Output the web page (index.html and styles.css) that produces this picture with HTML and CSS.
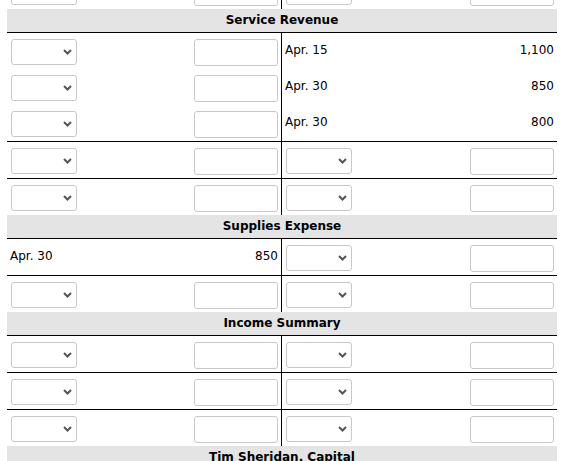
FILE: index.html
```html
<!DOCTYPE html>
<html>
<head>
<meta charset="utf-8">
<link rel="stylesheet" href="styles.css">
</head>
<body>
<div class="sheet">
  <div class="row">
    <div class="cell left"><div class="sel"><svg class="chev" viewBox="0 0 9 6" width="9" height="6"><polyline points="1,1 4.5,4.5 8,1"/></svg></div><input class="inp" type="text"></div>
    <div class="cell right"><div class="sel"><svg class="chev" viewBox="0 0 9 6" width="9" height="6"><polyline points="1,1 4.5,4.5 8,1"/></svg></div><input class="inp" type="text"></div>
  </div>

  <div class="band">Service Revenue</div>
  <div class="row">
    <div class="cell left"><div class="sel"><svg class="chev" viewBox="0 0 9 6" width="9" height="6"><polyline points="1,1 4.5,4.5 8,1"/></svg></div><input class="inp" type="text"></div>
    <div class="cell right text"><span>Apr. 15</span><span>1,100</span></div>
  </div>
  <div class="row">
    <div class="cell left"><div class="sel"><svg class="chev" viewBox="0 0 9 6" width="9" height="6"><polyline points="1,1 4.5,4.5 8,1"/></svg></div><input class="inp" type="text"></div>
    <div class="cell right text"><span>Apr. 30</span><span>850</span></div>
  </div>
  <div class="row">
    <div class="cell left"><div class="sel"><svg class="chev" viewBox="0 0 9 6" width="9" height="6"><polyline points="1,1 4.5,4.5 8,1"/></svg></div><input class="inp" type="text"></div>
    <div class="cell right text"><span>Apr. 30</span><span>800</span></div>
  </div>
  <div class="row ruled">
    <div class="cell left"><div class="sel"><svg class="chev" viewBox="0 0 9 6" width="9" height="6"><polyline points="1,1 4.5,4.5 8,1"/></svg></div><input class="inp" type="text"></div>
    <div class="cell right"><div class="sel"><svg class="chev" viewBox="0 0 9 6" width="9" height="6"><polyline points="1,1 4.5,4.5 8,1"/></svg></div><input class="inp" type="text"></div>
  </div>
  <div class="row ruled">
    <div class="cell left"><div class="sel"><svg class="chev" viewBox="0 0 9 6" width="9" height="6"><polyline points="1,1 4.5,4.5 8,1"/></svg></div><input class="inp" type="text"></div>
    <div class="cell right"><div class="sel"><svg class="chev" viewBox="0 0 9 6" width="9" height="6"><polyline points="1,1 4.5,4.5 8,1"/></svg></div><input class="inp" type="text"></div>
  </div>

  <div class="band">Supplies Expense</div>
  <div class="row">
    <div class="cell left text"><span>Apr. 30</span><span>850</span></div>
    <div class="cell right"><div class="sel"><svg class="chev" viewBox="0 0 9 6" width="9" height="6"><polyline points="1,1 4.5,4.5 8,1"/></svg></div><input class="inp" type="text"></div>
  </div>
  <div class="row ruled">
    <div class="cell left"><div class="sel"><svg class="chev" viewBox="0 0 9 6" width="9" height="6"><polyline points="1,1 4.5,4.5 8,1"/></svg></div><input class="inp" type="text"></div>
    <div class="cell right"><div class="sel"><svg class="chev" viewBox="0 0 9 6" width="9" height="6"><polyline points="1,1 4.5,4.5 8,1"/></svg></div><input class="inp" type="text"></div>
  </div>

  <div class="band">Income Summary</div>
  <div class="row">
    <div class="cell left"><div class="sel"><svg class="chev" viewBox="0 0 9 6" width="9" height="6"><polyline points="1,1 4.5,4.5 8,1"/></svg></div><input class="inp" type="text"></div>
    <div class="cell right"><div class="sel"><svg class="chev" viewBox="0 0 9 6" width="9" height="6"><polyline points="1,1 4.5,4.5 8,1"/></svg></div><input class="inp" type="text"></div>
  </div>
  <div class="row ruled">
    <div class="cell left"><div class="sel"><svg class="chev" viewBox="0 0 9 6" width="9" height="6"><polyline points="1,1 4.5,4.5 8,1"/></svg></div><input class="inp" type="text"></div>
    <div class="cell right"><div class="sel"><svg class="chev" viewBox="0 0 9 6" width="9" height="6"><polyline points="1,1 4.5,4.5 8,1"/></svg></div><input class="inp" type="text"></div>
  </div>
  <div class="row ruled">
    <div class="cell left"><div class="sel"><svg class="chev" viewBox="0 0 9 6" width="9" height="6"><polyline points="1,1 4.5,4.5 8,1"/></svg></div><input class="inp" type="text"></div>
    <div class="cell right"><div class="sel"><svg class="chev" viewBox="0 0 9 6" width="9" height="6"><polyline points="1,1 4.5,4.5 8,1"/></svg></div><input class="inp" type="text"></div>
  </div>

  <div class="band">Tim Sheridan, Capital</div>
  <div class="row">
    <div class="cell left"><div class="sel"><svg class="chev" viewBox="0 0 9 6" width="9" height="6"><polyline points="1,1 4.5,4.5 8,1"/></svg></div><input class="inp" type="text"></div>
    <div class="cell right"><div class="sel"><svg class="chev" viewBox="0 0 9 6" width="9" height="6"><polyline points="1,1 4.5,4.5 8,1"/></svg></div><input class="inp" type="text"></div>
  </div>
</div>
</body>
</html>
```
FILE: styles.css
```css
html, body {
  margin: 0;
  padding: 0;
  background: #fff;
  overflow: hidden;
}
body {
  font-family: "DejaVu Sans", Verdana, sans-serif;
  font-size: 12px;
  color: #000;
}
.sheet {
  width: 550px;
  margin: -27px 0 0 7px;
}
.band {
  height: 23px;
  line-height: 23px;
  background: #e4e4e4;
  border-bottom: 1px solid #000;
  text-align: center;
  font-weight: bold;
}
.row {
  display: grid;
  grid-template-columns: 275px 275px;
  height: 36px;
}
.row.ruled {
  border-top: 1px solid #000;
}
.cell {
  display: flex;
  justify-content: space-between;
  align-items: flex-start;
  box-sizing: border-box;
  padding-top: 6px;
}
.cell.left {
  border-right: 1px solid #000;
  padding-left: 4px;
  padding-right: 3px;
}
.cell.right {
  padding-left: 4px;
  padding-right: 3px;
}
.cell.text {
  padding-top: 10px;
  padding-left: 3px;
  padding-right: 3px;
  line-height: 14px;
}
.sel {
  width: 66px;
  height: 26px;
  box-sizing: border-box;
  border: 1px solid #c8c8c8;
  border-radius: 3px;
  background: #fff;
  display: flex;
  align-items: center;
  justify-content: flex-end;
  padding-right: 4px;
}
.chev {
  display: block;
  fill: none;
  stroke: #555;
  stroke-width: 2;
}
.inp {
  width: 84px;
  height: 27px;
  box-sizing: border-box;
  border: 1px solid #c8c8c8;
  border-radius: 3px;
  background: #fff;
  margin: 0;
  padding: 0;
  outline: none;
}
```
